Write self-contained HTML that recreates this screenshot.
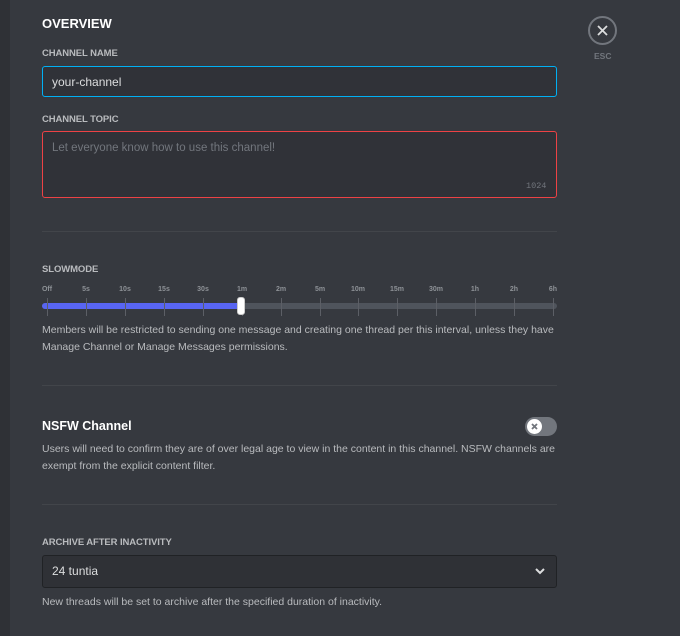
<!DOCTYPE html>
<html><head><style>
body{margin:0;width:680px;height:636px;background:#36393f;font-family:"Liberation Sans",sans-serif;position:relative;overflow:hidden}
.a{position:absolute}
.lbl{position:absolute;left:42px;font-size:9.5px;font-weight:bold;color:#b9bbbe;letter-spacing:-0.1px}
.desc{position:absolute;left:42px;font-size:10.5px;color:#b9bbbe;line-height:17px;width:520px}
.div{position:absolute;left:42px;width:515px;height:1px;background:#42454a}
.tk{position:absolute;top:298px;width:1px;height:18px;background:#5c5f66}
.tl{position:absolute;top:286px;font-size:7px;color:#8e9297;font-weight:bold;transform:translateX(-50%)}
</style></head><body>
<div class="a" style="left:0;top:0;width:10px;height:636px;background:#2f3136"></div>
<div class="a" style="left:42px;top:16px;font-size:13px;font-weight:bold;color:#fff">OVERVIEW</div>
<div class="lbl" style="top:48px">CHANNEL NAME</div>
<div class="a" style="left:42px;top:66px;width:513px;height:29px;border:1px solid #00b0f4;border-radius:3px;background:#303238"></div>
<div class="a" style="left:52px;top:75px;font-size:12px;color:#dcddde">your-channel</div>
<div class="lbl" style="top:114px">CHANNEL TOPIC</div>
<div class="a" style="left:42px;top:131px;width:513px;height:65px;border:1px solid #ed4245;border-radius:3px;background:#303238"></div>
<div class="a" style="left:52px;top:142px;font-size:11.5px;color:#72767d">Let everyone know how to use this channel!</div>
<div class="a" style="left:526px;top:181px;font-size:8.5px;color:#72767d;font-family:'Liberation Mono',monospace">1024</div>
<div class="div" style="top:231px"></div>
<div class="lbl" style="top:264px">SLOWMODE</div>
<div class="a" style="left:42px;top:303px;width:515px;height:6px;border-radius:3px;background:#4f545c"></div>
<div class="a" style="left:42px;top:303px;width:200px;height:6px;border-radius:3px;background:#5865f2"></div>
<div class="tk" style="left:47px"></div><div class="tk" style="left:86px"></div><div class="tk" style="left:125px"></div><div class="tk" style="left:164px"></div><div class="tk" style="left:203px"></div><div class="tk" style="left:242px"></div><div class="tk" style="left:281px"></div><div class="tk" style="left:320px"></div><div class="tk" style="left:358px"></div><div class="tk" style="left:397px"></div><div class="tk" style="left:436px"></div><div class="tk" style="left:475px"></div><div class="tk" style="left:514px"></div><div class="tk" style="left:553px"></div>
<div class="tl" style="left:47px">Off</div><div class="tl" style="left:86px">5s</div><div class="tl" style="left:125px">10s</div><div class="tl" style="left:164px">15s</div><div class="tl" style="left:203px">30s</div><div class="tl" style="left:242px">1m</div><div class="tl" style="left:281px">2m</div><div class="tl" style="left:320px">5m</div><div class="tl" style="left:358px">10m</div><div class="tl" style="left:397px">15m</div><div class="tl" style="left:436px">30m</div><div class="tl" style="left:475px">1h</div><div class="tl" style="left:514px">2h</div><div class="tl" style="left:553px">6h</div>
<div class="a" style="left:237px;top:297px;width:8px;height:18px;background:#fff;border-radius:3px;border:1px solid #ccc;box-sizing:border-box"></div>
<div class="desc" style="top:322px">Members will be restricted to sending one message and creating one thread per this interval, unless they have Manage Channel or Manage Messages permissions.</div>
<div class="div" style="top:385px"></div>
<div class="a" style="left:42px;top:419px;font-size:12.5px;font-weight:bold;color:#fff">NSFW Channel</div>
<div class="a" style="left:525px;top:417px;width:32px;height:19px;border-radius:10px;background:#72767d"></div>
<div class="a" style="left:527px;top:419px;width:15px;height:15px;border-radius:50%;background:#fff"></div>
<svg class="a" style="left:530px;top:422px" width="9" height="9"><path d="M2 2L7 7M7 2L2 7" stroke="#72767d" stroke-width="1.8"/></svg>
<div class="desc" style="top:441px">Users will need to confirm they are of over legal age to view in the content in this channel. NSFW channels are exempt from the explicit content filter.</div>
<div class="div" style="top:504px"></div>
<div class="lbl" style="top:537px">ARCHIVE AFTER INACTIVITY</div>
<div class="a" style="left:42px;top:555px;width:513px;height:31px;border:1px solid #202225;border-radius:3px;background:#2f3136"></div>
<div class="a" style="left:52px;top:564px;font-size:12px;color:#dcddde">24 tuntia</div>
<svg class="a" style="left:534px;top:566px" width="12" height="10"><path d="M2 3L6 7L10 3" stroke="#dcddde" stroke-width="2" fill="none"/></svg>
<div class="desc" style="top:594px">New threads will be set to archive after the specified duration of inactivity.</div>
<div class="a" style="left:588px;top:16px;width:25px;height:25px;border:2px solid #72767d;border-radius:50%"></div>
<svg class="a" style="left:596px;top:24px" width="13" height="13"><path d="M2 2L11 11M11 2L2 11" stroke="#dcddde" stroke-width="1.8"/></svg>
<div class="a" style="left:594px;top:51px;font-size:8.5px;font-weight:bold;color:#72767d">ESC</div>
</body></html>
